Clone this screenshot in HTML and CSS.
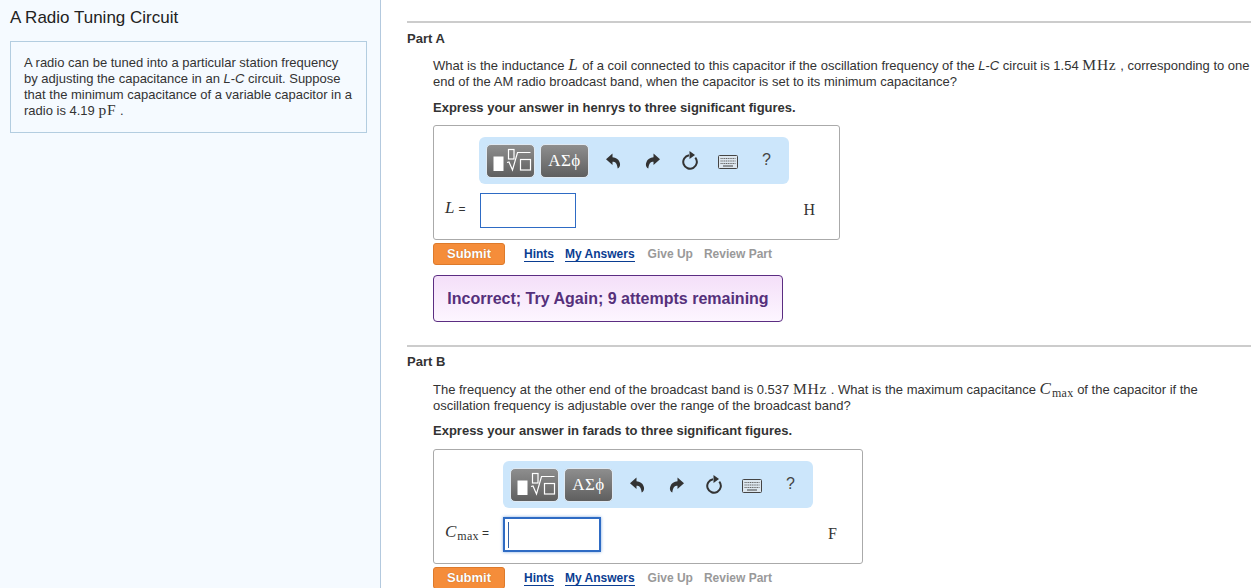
FILE: index.html
```html
<!DOCTYPE html>
<html lang="en">
<head>
<meta charset="utf-8">
<title>A Radio Tuning Circuit</title>
<link rel="stylesheet" href="styles.css">
</head>
<body>
<svg class="defs" width="0" height="0" aria-hidden="true">
  <symbol id="undo" viewBox="0 0 15 16"><path d="M6.500 0.500 0 6.300l6.500 5.700V8.800c2.700 0 4.300.9 5.200 6.700 2.600-1.500 2.800-4.300 1.800-6.600C12.500 6.300 10 4.500 6.500 4.300z"/></symbol>
  <symbol id="redo" viewBox="0 0 15 16"><path d="M8.500 0.500 15 6.300l-6.500 5.700V8.800c-2.700 0-4.300.9-5.200 6.700C.7 14 .5 11.200 1.500 8.900 2.500 6.300 5 4.500 8.500 4.300z"/></symbol>
  <symbol id="reset" viewBox="0 0 18 19"><path class="ring" d="M8 4.200a6.800 6.800 0 1 0 6.300 2.400"/><path d="M8.500 0v8L14 4z"/></symbol>
  <symbol id="keys" viewBox="0 0 20 14"><rect class="kbd" x=".5" y=".5" width="19" height="13" rx="1"/><path class="dots" d="M2.500 3.500h15M2.500 6h15M2.500 8.500h15"/><path class="bar" d="M5 11h10"/></symbol>
  <symbol id="templ" viewBox="0 0 44 28"><rect x="4.500" y="9.500" width="10" height="14.500" fill="#fff"/><rect class="tline" x="19.500" y="2.500" width="5.500" height="9.500"/><path class="tline" d="M18 15.500l2-.5 3.500 8L28.500 5.500H41.500"/><rect class="tline" x="31.500" y="12.500" width="10" height="10.500"/></symbol>
</svg>
<div class="page">
  <aside class="side">
    <h1 class="title">A Radio Tuning Circuit</h1>
    <div class="intro">A radio can be tuned into a particular station frequency by adjusting the capacitance in an <i>L</i>-<i>C</i> circuit. Suppose that the minimum capacitance of a variable capacitor in a radio is 4.19 <span class="m">pF</span> .</div>
  </aside>
  <main class="main">
    <section class="part part-a">
      <h2 class="part-name">Part A</h2>
      <div class="q">
        <p class="para">What is the inductance <i class="m m-big">L</i> of a coil connected to this capacitor if the oscillation frequency of the <i>L</i>-<i>C</i> circuit is 1.54 <span class="m">MHz</span> , corresponding to one end of the AM radio broadcast band, when the capacitor is set to its minimum capacitance?</p>
        <p class="express">Express your answer in henrys to three significant figures.</p>
        <div class="answer answer-a">
          <div class="toolbar">
            <span class="tbtn tbtn-t"><svg width="44" height="28"><use href="#templ"/></svg></span>
            <span class="tbtn tbtn-g">ΑΣϕ</span>
            <span class="tools">
              <svg class="ic ic-u" width="15" height="16"><use href="#undo"/></svg>
              <svg class="ic ic-r" width="15" height="16"><use href="#redo"/></svg>
              <svg class="ic ic-o" width="18" height="19"><use href="#reset"/></svg>
              <svg class="ic ic-k" width="20" height="14"><use href="#keys"/></svg>
              <span class="help">?</span>
            </span>
          </div>
          <div class="inrow">
            <span class="lab"><i class="m m-big">L</i> <span class="eq">=</span></span>
            <span class="field"></span>
            <span class="unit">H</span>
          </div>
        </div>
        <div class="actions">
          <span class="submit">Submit</span>
          <a class="lnk lnk-h">Hints</a><a class="lnk lnk-a">My Answers</a><span class="off off-g">Give Up</span><span class="off">Review Part</span>
        </div>
        <div class="fb">Incorrect; Try Again; 9 attempts remaining</div>
      </div>
    </section>
    <section class="part part-b">
      <h2 class="part-name">Part B</h2>
      <div class="q">
        <p class="para">The frequency at the other end of the broadcast band is 0.537 <span class="m">MHz</span> . What is the maximum capacitance <i class="m m-big">C</i><span class="sub">max</span> of the capacitor if the oscillation frequency is adjustable over the range of the broadcast band?</p>
        <p class="express">Express your answer in farads to three significant figures.</p>
        <div class="answer answer-b">
          <div class="toolbar">
            <span class="tbtn tbtn-t"><svg width="44" height="28"><use href="#templ"/></svg></span>
            <span class="tbtn tbtn-g">ΑΣϕ</span>
            <span class="tools">
              <svg class="ic ic-u" width="15" height="16"><use href="#undo"/></svg>
              <svg class="ic ic-r" width="15" height="16"><use href="#redo"/></svg>
              <svg class="ic ic-o" width="18" height="19"><use href="#reset"/></svg>
              <svg class="ic ic-k" width="20" height="14"><use href="#keys"/></svg>
              <span class="help">?</span>
            </span>
          </div>
          <div class="inrow">
            <span class="lab"><i class="m m-big">C</i><span class="sub">max</span> <span class="eq">=</span></span>
            <span class="field field-focus"><span class="caret"></span></span>
            <span class="unit">F</span>
          </div>
        </div>
        <div class="actions">
          <span class="submit">Submit</span>
          <a class="lnk lnk-h">Hints</a><a class="lnk lnk-a">My Answers</a><span class="off off-g">Give Up</span><span class="off">Review Part</span>
        </div>
      </div>
    </section>
  </main>
</div>
</body>
</html>
```
FILE: styles.css
```css
* { box-sizing: border-box; }
html, body { margin: 0; padding: 0; height: 588px; overflow: hidden; background: #fff; }
body { font-family: "Liberation Sans", Arial, sans-serif; color: #333; font-size: 13px; line-height: 16px; }
.defs { position: absolute; }
.page { display: flex; height: 588px; }
.side { flex: 0 0 381px; background: #f5faff; border-right: 1px solid #b3c9de; padding: 8px 13px 0 10px; }
.title { margin: 0 0 13px; font-size: 17px; font-weight: 400; line-height: 20px; color: #222; }
.intro { border: 1px solid #b3cde0; padding: 13px; height: 92px; color: #333; }
.m { font-family: "Liberation Serif", serif; font-size: 15.5px; line-height: 14px; letter-spacing: .8px; }
.m-big { font-size: 17px; letter-spacing: 1px; }
.main { flex: 0 0 844px; margin-left: 26px; padding-top: 21px; width: 844px; }
.part { border-top: 2px solid #ccc; }
.part-a { height: 324px; }
.part-name { margin: 0; padding-top: 8px; font-size: 13px; line-height: 16px; font-weight: 700; color: #333; }
.part-b .part-name { padding-top: 7px; }
.q { margin-left: 26px; padding-top: 11px; }
.part-b .q { padding-top: 12px; }
.para { margin: 0; width: 818px; }
.express { margin: 10px 0 0; font-weight: 700; font-size: 13px; }
.part-b .express { margin-top: 9px; }
.sub { font-family: "Liberation Serif", serif; font-size: 12px; line-height: 10px; position: relative; top: 3px; letter-spacing: .3px; }
.answer { margin-top: 9px; height: 115px; border: 1px solid #aaa; border-radius: 3px; background: #fff; padding-top: 11px; }
.part-b .answer { margin-top: 10px; }
.answer-a { width: 407px; }
.answer-b { width: 430px; }
.toolbar { width: 310px; height: 47px; background: #cce6fb; border-radius: 6px; display: flex; align-items: center; gap: 5px; padding: 0 0 0 7px; }
.answer-a .toolbar { margin-left: 45px; }
.answer-b .toolbar { margin-left: 69px; }
.tbtn { flex: none; height: 34px; border: 1px solid #dfe9f2; border-radius: 5px; background: linear-gradient(#8e8e8e, #5f5f5f); color: #fff; display: flex; align-items: center; justify-content: center; }
.tbtn-t { width: 49px; }
.tbtn-g { width: 49px; font-family: "Liberation Serif", serif; font-size: 17px; letter-spacing: .5px; }
.tline { fill: none; stroke: #fff; stroke-width: 1.200; }
.tools { display: flex; align-items: center; margin-left: 12px; }
.ic { fill: #333; flex: none; }
.ic-u { margin-right: 24px; }
.ic-r { margin-right: 21px; }
.ic-o { margin-right: 19px; }
.ic-k { margin-right: 24px; margin-top: 2px; }
.ring { fill: none; stroke: #333; stroke-width: 2; }
.kbd { fill: #dce6ee; stroke: #444; }
.dots { fill: none; stroke: #666; stroke-width: 1.200; stroke-dasharray: 1.200 .6; }
.bar { stroke: #444; }
.help { font-size: 16px; color: #444; margin-top: -1px; }
.inrow { display: flex; align-items: center; margin-top: 9px; height: 35px; }
.lab { flex: none; font-size: 11px; color: #333; white-space: nowrap; padding-bottom: 3px; }
.eq { font-size: 12px; }
.answer-a .lab { margin-left: 11px; width: 35px; }
.answer-b .lab { margin-left: 11px; width: 58px; }
.field { flex: none; height: 35px; border: 1px solid #2e6bc4; background: #fff; display: flex; align-items: center; padding-left: 3px; }
.answer-a .field { width: 96px; }
.answer-b .field { width: 98px; }
.field-focus { border-width: 2px; box-shadow: 0 0 3px #7fa8e0; }
.caret { width: 1px; height: 26px; background: #2e5fa8; }
.unit { flex: none; font-family: "Liberation Serif", serif; font-size: 16px; margin-left: auto; color: #333; padding-bottom: 2px; }
.answer-a .unit { margin-right: 24px; }
.answer-b .unit { margin-right: 25px; }
.actions { display: flex; align-items: center; margin-top: 3px; height: 22px; font-size: 12px; font-weight: 700; }
.submit { width: 72px; height: 22px; background: #f58d3a; border: 1px solid #dd7a2b; border-radius: 3px; color: #fff; text-align: center; line-height: 20px; font-size: 13px; margin-right: 19px; text-shadow: 0 0 1px #a85a1a; }
.lnk { color: #0a3d91; border-bottom: 1px solid #0a3d91; line-height: 14px; margin-right: 12px; }
.lnk-h { margin-right: 11px; }
.lnk-a { margin-right: 13px; }
.off { color: #999; }
.off-g { margin-right: 11px; }
.fb { margin-top: 10px; width: 350px; height: 47px; border: 1px solid #5b2d82; border-radius: 4px; background: linear-gradient(#f4dff9, #fdf6ff); color: #55307b; font-weight: 700; font-size: 16px; line-height: 45px; text-align: center; white-space: nowrap; }
```
